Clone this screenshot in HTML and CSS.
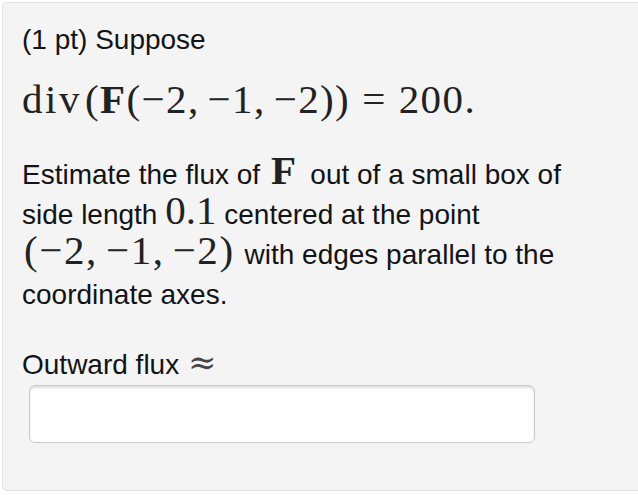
FILE: index.html
```html
<!DOCTYPE html>
<html>
<head>
<meta charset="utf-8">
<link rel="stylesheet" href="styles.css">
</head>
<body>
<div class="problem">
  <p class="line head">(1 pt) Suppose</p>
  <div class="display"><span class="fn">div</span>(<b class="bf">F</b>(−2,<span class="thin"></span>−1,<span class="thin"></span>−2))<span class="rel">=</span>200.</div>
  <p class="line para">Estimate the flux of <span class="m wide"><b class="bf">F</b></span> out of a small box of side length <span class="m tight">0.1</span> centered at the point <span class="m">(−2,<span class="thin"></span>−1,<span class="thin"></span>−2)</span> with edges parallel to the coordinate axes.</p>
  <p class="line para gap">Outward flux <span class="m approx">≈</span></p>
  <input class="answer" type="text">
</div>
</body>
</html>
```

FILE: styles.css
```css
html, body {
  margin: 0;
  padding: 0;
  background: #ffffff;
  overflow: hidden;
}
body {
  width: 638px;
  height: 495px;
  font-family: "Liberation Sans", Arial, sans-serif;
  color: #131313;
}
.problem {
  box-sizing: border-box;
  margin: 2px 0 0 2px;
  width: 680px;
  height: 489px;
  background: #f4f4f4;
  border: 1px solid #e2e2e2;
  border-radius: 5px;
  padding: 17px 0 0 19px;
}
.line {
  margin: 0;
  font-size: 28px;
  line-height: 40px;
  width: 570px;
}
.display {
  font-family: "Liberation Serif", "Times New Roman", serif;
  font-size: 41px;
  letter-spacing: 1.4px;
  line-height: 44px;
  margin: 17px 0 34px 0;
  color: #222;
  white-space: nowrap;
}
.fn {
  margin-right: 3px;
  letter-spacing: 2.5px;
}
.bf {
  font-weight: bold;
}
.thin {
  display: inline-block;
  width: 8px;
}
.rel {
  margin: 0 12px;
}
.m {
  font-family: "Liberation Serif", "Times New Roman", serif;
  font-size: 41px;
  line-height: 30px;
  letter-spacing: 1.6px;
  color: #222;
  white-space: nowrap;
  margin: 0 2px;
}
.wide {
  margin: 0 5px 0 3px;
}
.tight {
  letter-spacing: 0;
  margin: 0;
}
.gap {
  margin-top: 30px;
}
.approx {
  font-family: "DejaVu Serif", serif;
  font-size: 34px;
  color: #444;
  margin: 0 0 0 1px;
}
.answer {
  display: block;
  box-sizing: border-box;
  margin: 0 0 0 7px;
  width: 506px;
  height: 58px;
  border: 1px solid #c9c9c9;
  border-radius: 6px;
  background: #ffffff;
  box-shadow: inset 0 2px 2px rgba(0, 0, 0, 0.12);
  outline: none;
}
```
